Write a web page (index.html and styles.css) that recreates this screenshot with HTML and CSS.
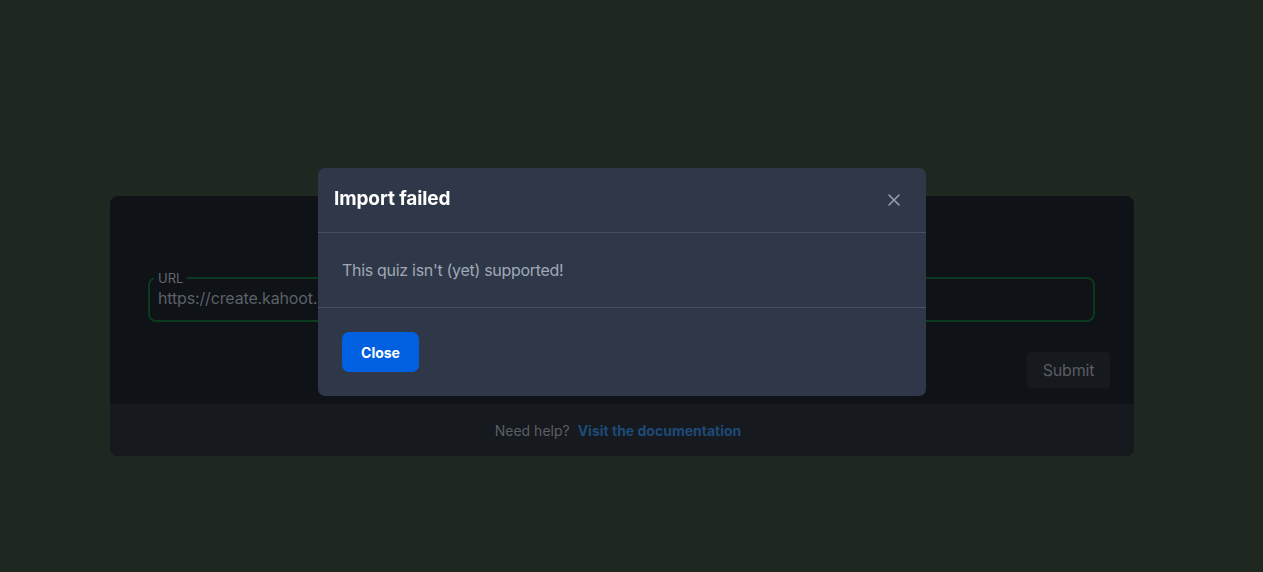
FILE: index.html
```html
<!DOCTYPE html>
<html lang="en">
<head>
<meta charset="utf-8">
<title>Import</title>
<link rel="stylesheet" href="styles.css">
</head>
<body>
<div class="page">
  <div class="card">
    <div class="card-body">
      <fieldset class="field">
        <legend class="field-label">URL</legend>
        <div class="field-value">https://create.kahoot.it/details/some-quiz</div>
      </fieldset>
      <div class="actions">
        <button class="submit-btn">Submit</button>
      </div>
    </div>
    <div class="card-footer">
      <span class="help">Need help?</span>
      <a class="doc-link" href="#">Visit the documentation</a>
    </div>
  </div>
</div>
<div class="overlay">
  <section class="modal">
    <header class="modal-header">
      <h2 class="modal-title">Import failed</h2>
      <button class="modal-close" aria-label="Close">
        <svg viewBox="0 0 24 24" width="12" height="12"><path d="M2 2L22 22M22 2L2 22" stroke="currentColor" stroke-width="3" stroke-linecap="round"/></svg>
      </button>
    </header>
    <div class="modal-body">This quiz isn't (yet) supported!</div>
    <footer class="modal-footer">
      <button class="close-btn">Close</button>
    </footer>
  </section>
</div>
</body>
</html>
```
FILE: styles.css
```css
* { box-sizing: border-box; }
html, body { margin: 0; height: 100%; }
body {
  background: #1f2820;
  font-family: Inter, "Noto Sans", sans-serif;
  overflow: hidden;
}
.page {
  padding: 196px 0 0 110px;
}
.card {
  width: 1024px;
  background: #0f1217;
  border-radius: 8px;
  overflow: hidden;
}
.card-body {
  padding: 76px 24px 16px;
}
.field {
  margin: 0 15px 0 14px;
  border: 2px solid #0b3a1f;
  border-radius: 8px;
  padding: 0 8px;
  height: 50px;
}
.field-label {
  font-size: 13px;
  line-height: 12px;
  color: #62666d;
  padding: 0 4px;
  margin-left: -4px;
}
.field-value {
  font-size: 16px;
  line-height: 20px;
  color: #5d6168;
  padding-top: 4px;
  white-space: nowrap;
  overflow: hidden;
  letter-spacing: -0.15px;
}
.actions {
  display: flex;
  justify-content: flex-end;
  margin-top: 30px;
}
.submit-btn {
  font-family: inherit;
  height: 36px;
  width: 83px;
  padding: 0;
  border: 0;
  border-radius: 4px;
  background: #16191e;
  color: #595d64;
  font-size: 16px;
  letter-spacing: -0.2px;
}
.card-footer {
  background: #16191e;
  height: 52px;
  display: flex;
  justify-content: center;
  align-items: center;
  gap: 8px;
  font-size: 14px;
  padding-right: 8px;
}
.help { color: #5b5f66; }
.doc-link {
  color: #1e4a78;
  font-weight: 700;
  text-decoration: none;
}
.overlay {
  position: fixed;
  inset: 0;
}
.modal {
  position: absolute;
  left: 318px;
  top: 168px;
  width: 608px;
  background: #2f3848;
  border-radius: 7px;
}
.modal-header {
  position: relative;
  padding: 15px 16px 17px;
  border-bottom: 1px solid #47505f;
}
.modal-title {
  margin: 0;
  font-size: 19px;
  line-height: 32px;
  font-weight: 700;
  color: #ffffff;
  letter-spacing: -0.1px;
}
.modal-close {
  position: absolute;
  top: 16px;
  right: 16px;
  width: 32px;
  height: 32px;
  border: 0;
  background: transparent;
  color: #9aa2b0;
  display: flex;
  align-items: center;
  justify-content: center;
  padding: 0;
}
.modal-body {
  padding: 25px 24px;
  font-size: 16px;
  line-height: 24px;
  color: #a0a8b6;
  border-bottom: 1px solid #47505f;
  letter-spacing: -0.3px;
}
.modal-footer {
  padding: 24px;
}
.close-btn {
  font-family: inherit;
  height: 40px;
  width: 77px;
  border: 0;
  border-radius: 7px;
  background: #0060df;
  color: #ffffff;
  font-size: 14px;
  font-weight: 700;
}
```
